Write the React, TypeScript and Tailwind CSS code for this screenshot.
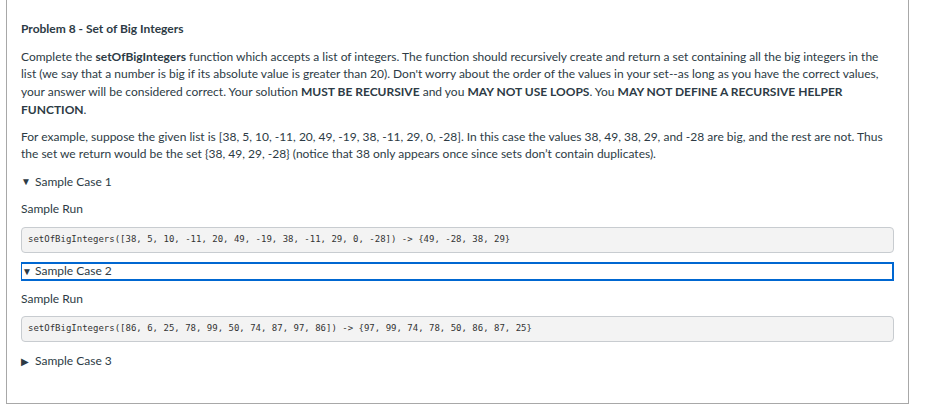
import React from 'react';

const sans = "font-['Lato','Noto_Sans',sans-serif]";
const mono = "font-['DejaVu_Sans_Mono','Liberation_Mono',monospace]";

const CodeBox: React.FC<{ children: React.ReactNode }> = ({ children }) => (
    <div className={`${mono} h-[26px] flex items-center px-[6px] bg-[#f3f3f3] border border-[#c8ccd0] rounded-[4px] text-[9px] text-[#333] whitespace-pre`}>
        {children}
    </div>
);

const CaseToggle: React.FC<{ open: boolean; label: string; focused?: boolean }> = ({ open, label, focused }) => (
    <div className={`flex items-center h-[19px] ${focused ? 'border-2 border-l border-[#0067d1]' : ''}`}>
        <span className={`${focused ? 'w-[13px]' : 'w-[14px]'} text-[10px] leading-none text-[#2d3b45]`}>{open ? '▼' : '▶'}</span>
        <span>{label}</span>
    </div>
);

export default function App() {
    return (
        <div className={`${sans} bg-white w-[946px] h-[414px] text-[12px] leading-[17.7px] text-[#2d3b45]`}>
            <div className="ml-[6px] w-[903px] h-[404px] border-l border-r border-b border-[#a8a8a8] pt-[20px] px-[14px]">
                <h2 className="font-bold">Problem 8 - Set of Big Integers</h2>
                <p className="mt-[10px]">
                    Complete the <b>setOfBigIntegers</b> function which accepts a list of integers. The function should recursively create and return a set containing all the big integers in the list (we say that a number is big if its absolute value is greater than 20). Don't worry about the order of the values in your set--as long as you have the correct values, your answer will be considered correct. Your solution <b>MUST BE RECURSIVE</b> and you <b>MAY NOT USE LOOPS</b>. You <b>MAY NOT DEFINE A RECURSIVE HELPER FUNCTION</b>.
                </p>
                <p className="mt-[9px]">
                    For example, suppose the given list is [38, 5, 10, -11, 20, 49, -19, 38, -11, 29, 0, -28]. In this case the values 38, 49, 38, 29, and -28 are big, and the rest are not. Thus the set we return would be the set {'{'}38, 49, 29, -28{'}'} (notice that 38 only appears once since sets don’t contain duplicates).
                </p>
                <div className="mt-[9px] flex flex-col gap-[9px]">
                    <CaseToggle open label="Sample Case 1" />
                    <div>Sample Run</div>
                    <CodeBox>setOfBigIntegers([38, 5, 10, -11, 20, 49, -19, 38, -11, 29, 0, -28]) -&gt; {'{'}49, -28, 38, 29{'}'}</CodeBox>
                    <CaseToggle open focused label="Sample Case 2" />
                    <div>Sample Run</div>
                    <CodeBox>setOfBigIntegers([86, 6, 25, 78, 99, 50, 74, 87, 97, 86]) -&gt; {'{'}97, 99, 74, 78, 50, 86, 87, 25{'}'}</CodeBox>
                    <CaseToggle open={false} label="Sample Case 3" />
                </div>
            </div>
        </div>
    );
}
